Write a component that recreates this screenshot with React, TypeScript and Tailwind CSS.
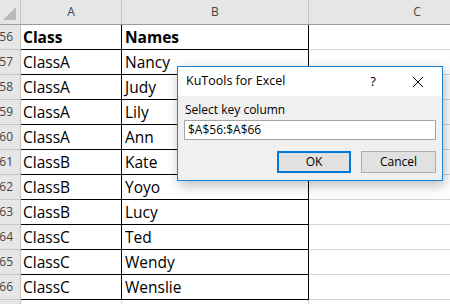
const rows = [
  { n: 56, a: "Class", b: "Names", bold: true },
  { n: 57, a: "ClassA", b: "Nancy" },
  { n: 58, a: "ClassA", b: "Judy" },
  { n: 59, a: "ClassA", b: "Lily" },
  { n: 60, a: "ClassA", b: "Ann" },
  { n: 61, a: "ClassB", b: "Kate" },
  { n: 62, a: "ClassB", b: "Yoyo" },
  { n: 63, a: "ClassB", b: "Lucy" },
  { n: 64, a: "ClassC", b: "Ted" },
  { n: 65, a: "ClassC", b: "Wendy" },
  { n: 66, a: "ClassC", b: "Wenslie" },
];

function KuToolsDialog() {
  return (
    <div className="absolute left-[177px] top-[66px] w-[266px] h-[115px] border border-[#1883d7] bg-[#f0f0f0] shadow-[2px_4px_12px_rgba(0,0,0,0.28)] font-['Open_Sans',sans-serif] text-[12px] text-black">
      {/* Title bar */}
      <div className="h-[29px] bg-white flex items-center pl-[8px]">
        <span className="flex-1 text-[12.5px]">KuTools for Excel</span>
        <span className="w-[20px] text-center text-[13px] mr-[29px]">?</span>
        <svg width="12" height="12" viewBox="0 0 12 12" className="mr-[18px]">
          <path d="M1 1 L11 11 M11 1 L1 11" stroke="#000" strokeWidth="1" />
        </svg>
      </div>

      {/* Body */}
      <div className="px-[6px] pt-[5px]">
        <div className="pl-[1px] leading-[18px] text-[12px]">Select key column</div>
        <div className="mt-[1px] h-[20px] border border-[#a5a5a5] bg-white flex items-center pl-[3px] text-[12px]">
          $A$56:$A$66
        </div>
        <div className="flex justify-end gap-[10px] mt-[11px]">
          <button className="w-[74px] h-[22px] border-2 border-[#0078d7] bg-[#e1e1e1] text-[12px] leading-none">
            OK
          </button>
          <button className="w-[75px] h-[22px] border border-[#adadad] bg-[#e1e1e1] text-[12px] leading-none">
            Cancel
          </button>
        </div>
      </div>
    </div>
  );
}

export default function App() {
  return (
    <div className="relative w-[450px] h-[304px] overflow-hidden bg-white">
      {/* Column headers */}
      <div className="flex h-[25px] bg-[#e6e6e6] border-b border-[#9b9b9b] font-['Open_Sans',sans-serif] text-[12px] text-[#444]">
        <div className="w-[21px] shrink-0 border-r border-[#c6c6c6] relative">
          <svg width="14" height="14" viewBox="0 0 14 14" className="absolute right-[3px] bottom-[3px]">
            <polygon points="13,0 13,13 0,13" fill="#b9b9b9" />
          </svg>
        </div>
        <div className="w-[101px] shrink-0 border-r border-[#c6c6c6] flex items-center justify-center">A</div>
        <div className="w-[187px] shrink-0 border-r border-[#c6c6c6] flex items-center justify-center">B</div>
        <div className="w-[216px] shrink-0 flex items-center justify-center">C</div>
      </div>

      {/* Data rows */}
      {rows.map((r) => (
        <div key={r.n} className="flex h-[25px]">
          <div className="w-[21px] shrink-0 bg-[#e6e6e6] border-r border-b border-[#c6c6c6] flex items-center justify-end pr-[7px] font-['Open_Sans',sans-serif] text-[12px] text-[#444]">
            {r.n}
          </div>
          <div
            className={`w-[101px] shrink-0 border-r border-b border-black flex items-end pb-[2px] pl-[2px] font-['Open_Sans',sans-serif] text-[15.5px] leading-[20px] text-black ${r.bold ? "font-bold" : ""}`}
          >
            {r.a}
          </div>
          <div
            className={`w-[187px] shrink-0 border-r border-b border-black flex items-end pb-[2px] pl-[3px] font-['Open_Sans',sans-serif] text-[15.5px] leading-[20px] text-black ${r.bold ? "font-bold" : ""}`}
          >
            {r.b}
          </div>
          <div className="w-[216px] shrink-0 border-b border-[#d4d4d4]" />
        </div>
      ))}
      <div className="flex h-[25px]">
        <div className="w-[21px] shrink-0 bg-[#e6e6e6] border-r border-[#c6c6c6]" />
        <div className="w-[101px] shrink-0 border-r border-[#d4d4d4]" />
        <div className="w-[187px] shrink-0 border-r border-[#d4d4d4]" />
      </div>

      <KuToolsDialog />
    </div>
  );
}
